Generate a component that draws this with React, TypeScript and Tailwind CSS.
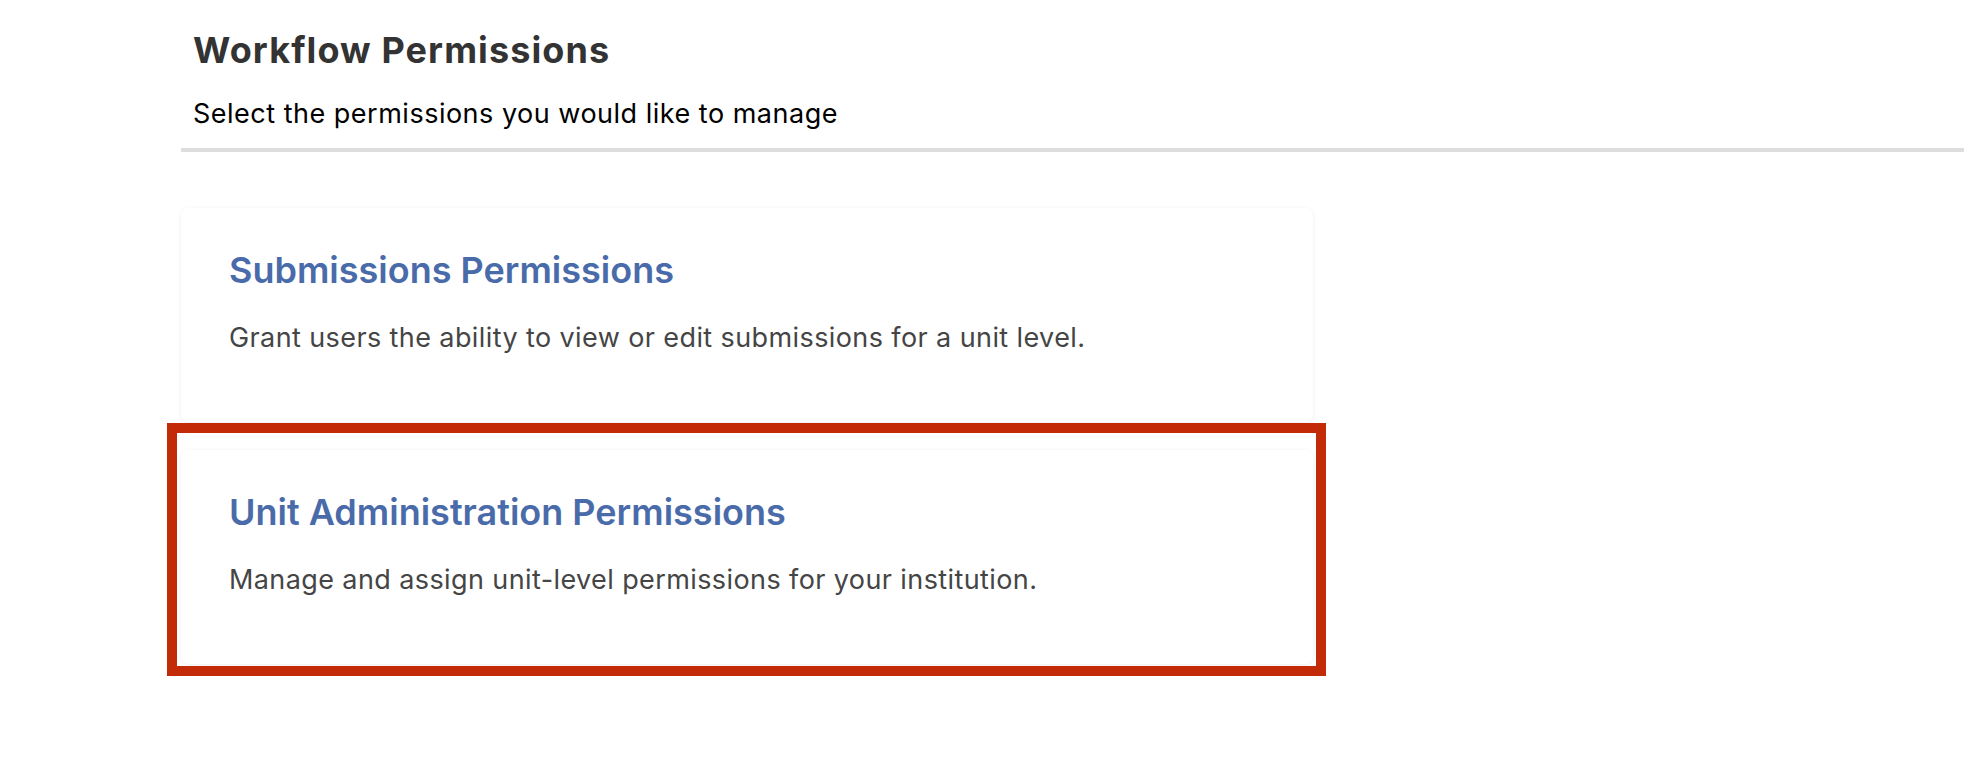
const CARDS = [
  {
    title: "Submissions Permissions",
    text: "Grant users the ability to view or edit submissions for a unit level.",
    highlighted: false,
  },
  {
    title: "Unit Administration Permissions",
    text: "Manage and assign unit-level permissions for your institution.",
    highlighted: true,
  },
];

function PermissionCard({ title, text, highlighted }: { title: string; text: string; highlighted: boolean }) {
  return (
    <div className="relative">
      <div className="h-[214px] rounded-[8px] bg-white px-[48px] pt-[40px] shadow-[0_1px_5px_rgba(0,0,0,0.07)]">
        <h2 className="text-[36px] font-semibold leading-[44px] text-[#4a6ba9]">{title}</h2>
        <p className="mt-[29px] text-[27px] leading-[34px] tracking-[0.4px] text-[#454545]">{text}</p>
      </div>
      {highlighted && (
        <div className="pointer-events-none absolute -bottom-[12px] -left-[14px] -right-[13px] -top-[27px] border-[10px] border-[#c32a08]" />
      )}
    </div>
  );
}

export default function App() {
  return (
    <div className="min-h-screen bg-white pl-[181px] font-['Inter',sans-serif]">
      <div className="border-b-4 border-[#dddddd] pb-[17px] pl-[12px] pt-[28px]">
        <h1 className="text-[36px] font-bold leading-[44px] tracking-[1.1px] text-[#333333]">Workflow Permissions</h1>
        <p className="mt-[25px] text-[27px] leading-[34px] tracking-[0.5px] text-black">
          Select the permissions you would like to manage
        </p>
      </div>
      <div className="flex w-[1132px] flex-col gap-[28px] pt-[56px]">
        {CARDS.map((c) => (
          <PermissionCard key={c.title} {...c} />
        ))}
      </div>
    </div>
  );
}
